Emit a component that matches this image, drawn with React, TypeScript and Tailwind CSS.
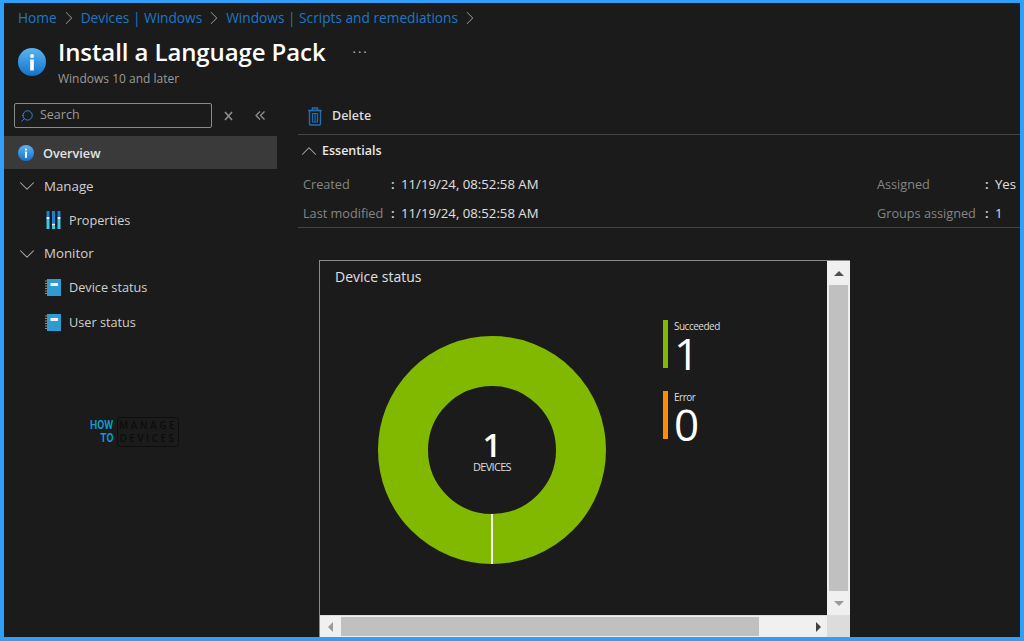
import React from "react";
import { ChevronRight, ChevronDown, ChevronUp, Search } from "lucide-react";

const font = "[font-family:'Open_Sans','Noto_Sans',sans-serif]";

function InfoIcon({ size }: { size: number }) {
  return (
    <svg width={size} height={size} viewBox="0 0 28 28" className="shrink-0">
      <defs>
        <linearGradient id={`g${size}`} x1="0" y1="0" x2="0" y2="1">
          <stop offset="0" stopColor="#5ab4f2" />
          <stop offset="1" stopColor="#1272cc" />
        </linearGradient>
      </defs>
      <circle cx="14" cy="14" r="14" fill={`url(#g${size})`} />
      <circle cx="14" cy="8" r="2" fill="#fff" />
      <rect x="12.2" y="11.5" width="3.6" height="11" fill="#fff" />
    </svg>
  );
}

function TrashIcon() {
  return (
    <svg width="16" height="19" viewBox="0 0 16 19" fill="none" stroke="#1f6fb8" strokeWidth="1.4">
      <path d="M1 3.5h14" />
      <path d="M5.500 3V1h5v2" />
      <rect x="2.500" y="3.500" width="11" height="14.500" rx="1" />
      <path d="M5.500 6.500v8.500h5V6.500z" strokeWidth="1.200" />
      <path d="M8 6.500v8.500" strokeWidth="1.200" />
    </svg>
  );
}

function ClearIcon() {
  return (
    <svg width="9" height="10" viewBox="0 0 9 10" fill="none" stroke="#8f8f8f" strokeWidth="1.6" className="shrink-0">
      <path d="M1 1l7 8M8 1l-7 8" />
    </svg>
  );
}

function CollapseIcon() {
  return (
    <svg width="10" height="9" viewBox="0 0 10 9" fill="none" stroke="#8f8f8f" strokeWidth="1.3" className="shrink-0">
      <path d="M5 .5L1 4.500l4 4M9.500 .5l-4 4 4 4" />
    </svg>
  );
}

function SlidersIcon() {
  return (
    <svg width="15" height="18" viewBox="0 0 15 18">
      <rect x="0.500" y="0" width="3" height="6" fill="#1f7fd0" />
      <rect x="0.500" y="8" width="3" height="10" fill="#3fc8ec" />
      <rect x="0.500" y="6" width="3" height="2" fill="#e8f6fc" />
      <rect x="6" y="0" width="3" height="12" fill="#1f7fd0" />
      <rect x="6" y="14.500" width="3" height="3.500" fill="#3fc8ec" />
      <rect x="6" y="12.500" width="3" height="2" fill="#e8f6fc" />
      <rect x="11.500" y="0" width="3" height="6" fill="#1f7fd0" />
      <rect x="11.500" y="8" width="3" height="10" fill="#3fc8ec" />
      <rect x="11.500" y="6" width="3" height="2" fill="#e8f6fc" />
    </svg>
  );
}

function BookIcon() {
  return (
    <svg width="16" height="17" viewBox="0 0 16 17">
      <rect x="2" y="0" width="14" height="17" fill="#2f9bd0" />
      <path d="M0 2h2M0 4.500h2M0 7h2M0 9.500h2M0 12h2M0 14.500h2" stroke="#8a8a8a" strokeWidth="1" />
      <rect x="5.500" y="4" width="7.500" height="3" fill="#f2f2f2" />
    </svg>
  );
}

function Crumb({ children }: { children: React.ReactNode }) {
  return <span className="text-[13.7px] text-[#1a78c8] whitespace-nowrap">{children}</span>;
}

function Sep() {
  return <ChevronRight size={22} strokeWidth={1.1} className="mx-[1px] text-[#8a8a8a] shrink-0" />;
}

function Child({ icon, label, className }: { icon: React.ReactNode; label: string; className: string }) {
  return (
    <div className={`flex items-center pl-[41px] ${className}`}>
      <span className="w-[16px] flex justify-center shrink-0">{icon}</span>
      <span className="ml-[8px] pt-[1px] text-[12.7px] text-[#d0d0d0]">{label}</span>
    </div>
  );
}

function Group({ label, className }: { label: string; className: string }) {
  return (
    <div className={`flex items-center pl-[10px] ${className}`}>
      <ChevronDown size={26} strokeWidth={0.95} className="text-[#b0b0b0] shrink-0" />
      <span className="ml-[4px] pt-[1px] text-[13.3px] text-[#d0d0d0]">{label}</span>
    </div>
  );
}

function Legend({ color, label, value, className }: { color: string; label: string; value: string; className: string }) {
  return (
    <div className={`flex h-[48px] ${className}`}>
      <div className="w-[5px] h-full" style={{ backgroundColor: color }} />
      <div className="ml-[6px] flex flex-col">
        <span className="text-[10px] leading-[12px] tracking-[-0.5px] text-[#dddddd]">{label}</span>
        <span className="text-[44px] leading-[42px] text-white font-normal">{value}</span>
      </div>
    </div>
  );
}

function Row({ label, value, w }: { label: string; value: string; w: string }) {
  return (
    <div className="flex items-center">
      <span className={`${w} text-[12.7px] text-[#858585] whitespace-nowrap`}>{label}</span>
      <span className="w-[10px] text-[13px] font-semibold text-[#e0e0e0]">:</span>
      <span className="text-[13.2px] font-medium text-[#e0e0e0] whitespace-nowrap">{value}</span>
    </div>
  );
}

export default function App() {
  return (
    <div className={`w-[1024px] h-[641px] bg-[#1b1b1b] border-[#2f9ffa] border-t-[3px] border-l-[4px] border-r-[4px] border-b-[4px] flex flex-col overflow-hidden ${font}`}>
      <div className="flex items-center h-[29px] pl-[14px] pt-[1px] shrink-0">
        <Crumb>Home</Crumb>
        <Sep />
        <Crumb>Devices | Windows</Crumb>
        <Sep />
        <Crumb>Windows | Scripts and remediations</Crumb>
        <Sep />
      </div>
      <div className="flex h-[64px] pl-[14px] shrink-0">
        <div className="pt-[16px]"><InfoIcon size={28} /></div>
        <div className="ml-[12px] flex flex-col">
          <div className="flex items-center h-[40px]">
            <span className="text-[24px] font-semibold text-white tracking-[-0.1px] leading-[32px] whitespace-nowrap">Install a Language Pack</span>
            <span className="ml-[27px] text-[#b8b8b8] text-[13px] leading-none tracking-[2px]">···</span>
          </div>
          <span className="text-[12px] leading-[14px] text-[#9a9a9a]">Windows 10 and later</span>
        </div>
      </div>
      <div className="flex flex-1 min-h-0 pt-[7px]">
        <aside className="w-[273px] shrink-0 flex flex-col">
          <div className="flex items-center h-[25px] pl-[10px]">
            <div className="w-[198px] h-[25px] border border-[#8a8a8a] rounded-[2px] flex items-center pl-[5px]">
              <Search size={14} strokeWidth={1.5} className="text-[#3a8fd8] -scale-x-100" />
              <span className="ml-[6px] text-[12.5px] text-[#9a9a9a]">Search</span>
            </div>
            <span className="ml-[12px] flex"><ClearIcon /></span>
            <span className="ml-[22px] flex"><CollapseIcon /></span>
          </div>
          <div className="flex items-center h-[33px] mt-[8px] pl-[14px] bg-[#3a3a3a]">
            <InfoIcon size={16} />
            <span className="ml-[9px] pt-[2px] text-[12.7px] font-semibold text-[#e4e4e4]">Overview</span>
          </div>
          <Group label="Manage" className="h-[34px]" />
          <Child icon={<SlidersIcon />} label="Properties" className="h-[34px]" />
          <Group label="Monitor" className="h-[33px]" />
          <Child icon={<BookIcon />} label="Device status" className="h-[35px]" />
          <Child icon={<BookIcon />} label="User status" className="h-[35px]" />
          <div className="flex items-center ml-[88px] mt-[77px]">
            <div className="flex flex-col items-end w-[21px] text-[#0a9fdc] text-[12px] leading-[13px] font-semibold [font-family:'Roboto',sans-serif]">
              <span className="scale-x-[0.85] origin-right">HOW</span>
              <span className="scale-x-[0.85] origin-right">TO</span>
            </div>
            <div className="ml-[4px] w-[62px] h-[30px] border border-[#0e0e0e] rounded-[3px] flex flex-col items-center justify-center text-[#0c0c0c] text-[10px] leading-[13px] tracking-[2.5px] font-semibold">
              <span>MANAGE</span>
              <span>DEVICES</span>
            </div>
          </div>
        </aside>
        <main className="flex-1 min-w-0 flex flex-col pl-[21px]">
          <div className="flex items-center h-[35px] pl-[9px] shrink-0 -mt-[4px]">
            <TrashIcon />
            <span className="ml-[9px] text-[12.5px] font-semibold text-[#dcdcdc]">Delete</span>
          </div>
          <div className="border-t border-[#444444] border-b h-[94px] shrink-0">
            <div className="flex items-center h-[32px] -ml-[2px]">
              <ChevronUp size={26} strokeWidth={0.95} className="text-[#b0b0b0] shrink-0" />
              <span className="text-[12.5px] font-semibold text-[#e8e8e8]">Essentials</span>
            </div>
            <div className="flex justify-between h-[34px] pl-[5px] pt-[1px] items-center">
              <Row label="Created" value="11/19/24, 08:52:58 AM" w="w-[88px]" />
              <div className="w-[143px]"><Row label="Assigned" value="Yes" w="w-[108px]" /></div>
            </div>
            <div className="flex justify-between h-[26px] pl-[5px] items-center">
              <Row label="Last modified" value="11/19/24, 08:52:58 AM" w="w-[88px]" />
              <div className="w-[143px]"><Row label="Groups assigned" value="1" w="w-[108px]" /></div>
            </div>
          </div>
          <div className="ml-[21px] mt-[32px] w-[531px] flex-1 min-h-0 border-l border-t border-[#8a8a8a] flex flex-col">
            <div className="flex flex-1 min-h-0">
              <div className="flex-1 min-w-0 flex flex-col">
                <div className="pl-[15px] pt-[6px] text-[14px] leading-[20px] text-[#e0e0e0]">Device status</div>
                <div className="flex">
                  <div className="relative ml-[58px] mt-[49px] w-[228px] h-[228px]">
                    <svg width="228" height="228" viewBox="0 0 228 228" className="block">
                      <circle cx="114" cy="114" r="89" fill="none" stroke="#80b900" strokeWidth="50" />
                      <rect x="113" y="178" width="2" height="50" fill="#f4f4f4" />
                    </svg>
                    <div className="absolute inset-0 flex flex-col items-center justify-center">
                      <span className="text-[33px] leading-[30px] text-white font-semibold mt-[3px]">1</span>
                      <span className="text-[11px] leading-[12px] tracking-[-0.7px] text-[#dddddd] mt-[1px]">DEVICES</span>
                    </div>
                  </div>
                  <div className="ml-[57px] mt-[33px] flex flex-col">
                    <Legend color="#80b900" label="Succeeded" value="1" className="" />
                    <Legend color="#ff8c00" label="Error" value="0" className="mt-[23px]" />
                  </div>
                </div>
              </div>
              <div className="w-[23px] shrink-0 bg-[#f0f0f0] flex flex-col items-center">
                <div className="h-[24px] flex items-center justify-center">
                  <div className="w-0 h-0 border-l-[5px] border-r-[5px] border-b-[5px] border-l-transparent border-r-transparent border-b-[#505050]" />
                </div>
                <div className="w-[19px] flex-1 bg-[#c0c0c0]" />
                <div className="h-[24px] flex items-center justify-center">
                  <div className="w-0 h-0 border-l-[5px] border-r-[5px] border-t-[5px] border-l-transparent border-r-transparent border-t-[#9a9a9a]" />
                </div>
              </div>
            </div>
            <div className="h-[22px] shrink-0 flex bg-[#f0f0f0] border-t border-[#dddddd]">
              <div className="w-[21px] flex items-center justify-center">
                <div className="w-0 h-0 border-t-[5px] border-b-[5px] border-r-[5px] border-t-transparent border-b-transparent border-r-[#9a9a9a]" />
              </div>
              <div className="w-[418px] bg-[#c0c0c0] my-[1px]" />
              <div className="flex-1 flex items-center justify-end pr-[4px]">
                <div className="w-0 h-0 border-t-[5px] border-b-[5px] border-l-[5px] border-t-transparent border-b-transparent border-l-[#404040] mr-[2px]" />
              </div>
              <div className="w-[23px] bg-[#dcdcdc]" />
            </div>
          </div>
        </main>
      </div>
    </div>
  );
}
